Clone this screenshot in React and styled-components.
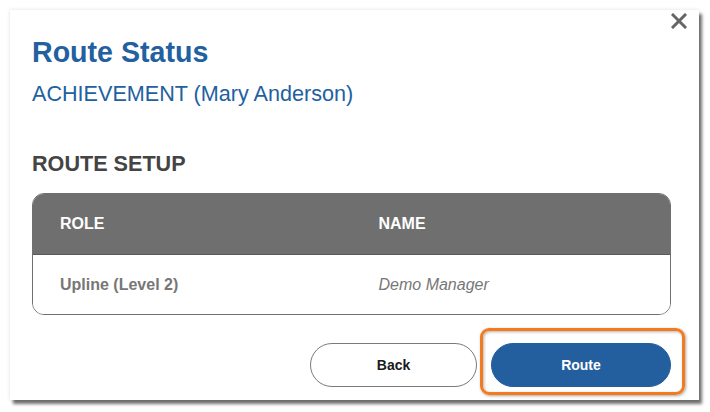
import React from "react";
import styled, { createGlobalStyle } from "styled-components";

const Global = createGlobalStyle`
  html, body { margin: 0; padding: 0; background: #ffffff; }
  body { font-family: "Liberation Sans", Arial, sans-serif; }
  * { box-sizing: border-box; }
`;

const Page = styled.div`
  padding: 10px 11px 12px 10px;
`;

const Card = styled.div`
  position: relative;
  width: 689px;
  height: 390px;
  background: #fff;
  padding: 26px 28px 13px 22px;
  display: flex;
  flex-direction: column;
  box-shadow: 0 0 4px rgba(0, 0, 0, 0.12), 3px 4px 3px rgba(0, 0, 0, 0.55);
`;

const Close = styled.button`
  position: absolute;
  top: 3px;
  right: 12px;
  width: 16px;
  height: 16px;
  padding: 0;
  border: 0;
  background: none;
  display: flex;
  cursor: pointer;
`;

const Title = styled.h1`
  margin: 0;
  font-size: 28.6px;
  line-height: 32px;
  font-weight: 700;
  color: #22609f;
`;

const Subtitle = styled.div`
  margin-top: 14px;
  font-size: 21.6px;
  line-height: 24px;
  color: #22609f;
`;

const SectionHeading = styled.h2`
  margin: 46px 0 0;
  font-size: 21.6px;
  line-height: 24px;
  font-weight: 700;
  color: #444;
`;

const Table = styled.div`
  margin-top: 17px;
  border: 1px solid #707070;
  border-radius: 12px;
  overflow: hidden;
`;

const Row = styled.div`
  display: grid;
  grid-template-columns: 1fr 1fr;
  align-items: center;
  height: ${(p) => (p.$head ? "61px" : "59px")};
  background: ${(p) => (p.$head ? "#6f6f6f" : "#fff")};
  border-bottom: ${(p) => (p.$head ? "1px solid #5a5a5a" : "0")};
`;

const Cell = styled.div`
  padding-left: 27px;
  font-size: 16px;
  line-height: 18px;
  font-weight: ${(p) => (p.$italic ? 400 : 700)};
  font-style: ${(p) => (p.$italic ? "italic" : "normal")};
  color: ${(p) => (p.$head ? "#fff" : "#777")};
`;

const Footer = styled.div`
  margin-top: auto;
  display: flex;
  justify-content: flex-end;
  gap: 14px;
`;

const Button = styled.button`
  height: 44px;
  width: ${(p) => (p.$primary ? "180px" : "167px")};
  border-radius: 22px;
  border: 1px solid ${(p) => (p.$primary ? "#235e9e" : "#7a7a7a")};
  background: ${(p) => (p.$primary ? "#235e9e" : "#fff")};
  color: ${(p) => (p.$primary ? "#fff" : "#1a1a1a")};
  font-family: "Liberation Sans", Arial, sans-serif;
  font-size: 14px;
  font-weight: 700;
  cursor: pointer;
`;

const Highlight = styled.div`
  position: relative;
  display: flex;
  &::after {
    content: "";
    position: absolute;
    inset: -15px -14px -8px -11px;
    border: 3px solid #f47a1f;
    border-radius: 9px;
    box-shadow: 1px 1px 3px rgba(0, 0, 0, 0.35), inset 1px 1px 3px rgba(0, 0, 0, 0.3);
    pointer-events: none;
  }
`;

export default function App() {
  return (
    <>
      <Global />
      <Page>
        <Card>
          <Close aria-label="Close">
            <svg width="16" height="16" viewBox="0 0 16 16">
              <path d="M2 2 L14 14 M14 2 L2 14" stroke="#666" strokeWidth="3" strokeLinecap="square" />
            </svg>
          </Close>
          <Title>Route Status</Title>
          <Subtitle>ACHIEVEMENT (Mary Anderson)</Subtitle>
          <SectionHeading>ROUTE SETUP</SectionHeading>
          <Table>
            <Row $head>
              <Cell $head>ROLE</Cell>
              <Cell $head>NAME</Cell>
            </Row>
            <Row>
              <Cell>Upline (Level 2)</Cell>
              <Cell $italic>Demo Manager</Cell>
            </Row>
          </Table>
          <Footer>
            <Button>Back</Button>
            <Highlight>
              <Button $primary>Route</Button>
            </Highlight>
          </Footer>
        </Card>
      </Page>
    </>
  );
}
